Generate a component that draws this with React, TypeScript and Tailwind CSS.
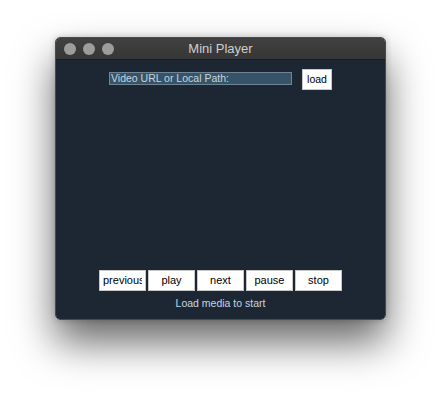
import React from "react";

export default function App() {
  const btns = ["previous", "play", "next", "pause", "stop"];
  return (
    <div className="w-[442px] h-[393px] bg-white flex justify-start pl-[55px] pt-[37px] font-['Liberation_Sans',Arial,sans-serif]">
      <div className="w-[331px] h-[283px] flex flex-col rounded-[5px] overflow-hidden border border-[#4a4a4a] shadow-[0_22px_40px_rgba(0,0,0,0.6),0_0_6px_rgba(0,0,0,0.2)]">
        <div className="h-[22px] relative flex items-center justify-center bg-gradient-to-b from-[#414141] to-[#363636] border-b border-[#1a1a1a]">
          <div className="absolute left-[8px] top-[5px] flex gap-[7px]">
            <div className="w-[12px] h-[12px] rounded-full bg-[#9d9d9d]" />
            <div className="w-[12px] h-[12px] rounded-full bg-[#9d9d9d]" />
            <div className="w-[12px] h-[12px] rounded-full bg-[#9d9d9d]" />
          </div>
          <span className="text-[13px] text-[#cfcfcf]">Mini Player</span>
        </div>
        <div className="flex-1 bg-[#1c2733] flex flex-col items-center">
          <div className="flex items-start gap-[10px] mt-[9px]">
            <div className="mt-[3px] w-[183px] h-[13px] bg-[#365367] border border-[#6f8494] flex items-center px-[1px]">
              <span className="text-[10.5px] leading-none text-[#c9d6df]">Video URL or Local Path:</span>
            </div>
            <div className="w-[30px] h-[21px] bg-white border border-[#c8c8c8] flex items-center justify-center text-[10.5px] text-black">
              load
            </div>
          </div>
          <div className="flex-1" />
          <div className="flex gap-[2px]">
            {btns.map((b) => (
              <div
                key={b}
                className="w-[47px] h-[21px] bg-white border border-[#c8c8c8] flex items-center"
              >
                <div className="mx-[3px] flex-1 overflow-hidden whitespace-nowrap text-center text-[11px] text-black">
                  {b}
                </div>
              </div>
            ))}
          </div>
          <div className="mt-[5px] mb-[9px] text-[10.5px] leading-[14px] text-[#c6d6e4]">Load media to start</div>
        </div>
      </div>
    </div>
  );
}
